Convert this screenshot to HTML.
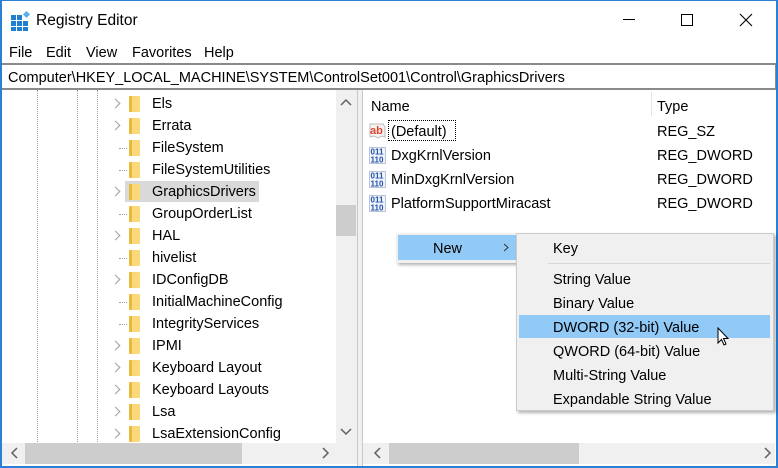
<!DOCTYPE html>
<html><head><style>
*{margin:0;padding:0;box-sizing:border-box}
body{width:778px;height:468px;overflow:hidden;background:#fff;font-family:"Liberation Sans",sans-serif;font-size:14px;color:#000;position:relative}
.a{position:absolute;white-space:nowrap}
.t{position:absolute;white-space:nowrap;line-height:16px}
.fold{position:absolute;width:11px;height:16px;background:linear-gradient(90deg,#e8b93c 0 3px,#fbd97a 3px);border-radius:1px}
.chev{position:absolute;width:7px;height:7px;border-right:1.5px solid #a0a0a0;border-top:1.5px solid #a0a0a0;transform:rotate(45deg)}
.dot{position:absolute;border-left:1px dotted #a0a0a0}
.ico{position:absolute;width:17px;height:17px}
</style></head><body>
<div class="a" style="left:0;top:0;width:778px;height:468px;border:2px solid #2b7fd4;border-top:1px solid #2b7fd4"></div>
<svg class="a" style="left:11px;top:11px" width="20" height="20" viewBox="0 0 20 20">
<rect x="0" y="4" width="5" height="5" fill="#1f7fd0"/><rect x="6" y="4" width="5" height="5" fill="#1f7fd0"/>
<rect x="0" y="10" width="5" height="5" fill="#1f7fd0"/><rect x="6" y="10" width="5" height="5" fill="#1f7fd0"/><rect x="12" y="10" width="5" height="5" fill="#1f7fd0"/>
<rect x="0" y="16" width="5" height="4" fill="#1f7fd0"/><rect x="6" y="16" width="5" height="4" fill="#1f7fd0"/><rect x="12" y="16" width="5" height="4" fill="#1f7fd0"/>
<rect x="13" y="1" width="5" height="5" fill="#5ab0ea" transform="rotate(45 15.5 3.5)"/></svg>
<div class="t" style="left:36px;top:13px;font-size:15.5px">Registry Editor</div>
<div class="a" style="left:623px;top:19px;width:12px;border-top:1px solid #000"></div>
<div class="a" style="left:681px;top:14px;width:12px;height:12px;border:1px solid #000"></div>
<svg class="a" style="left:739px;top:13px" width="14" height="14"><path d="M1 1L13 13M13 1L1 13" stroke="#000" stroke-width="1.1"/></svg>
<div class="t" style="left:9px;top:45px;font-size:14.5px">File</div>
<div class="t" style="left:46px;top:45px;font-size:14.5px">Edit</div>
<div class="t" style="left:86px;top:45px;font-size:14.5px">View</div>
<div class="t" style="left:132px;top:45px;font-size:14.5px">Favorites</div>
<div class="t" style="left:204px;top:45px;font-size:14.5px">Help</div>
<div class="a" style="left:2px;top:63px;width:774px;height:27px;border-top:2px solid #8a8a8a;border-bottom:2px solid #8a8a8a;border-right:1px solid #8a8a8a;background:#fff"></div>
<div class="t" style="left:8px;top:70px;font-size:14.5px">Computer\HKEY_LOCAL_MACHINE\SYSTEM\ControlSet001\Control\GraphicsDrivers</div>
<div class="a" style="left:357px;top:90px;width:6px;height:376px;background:#f0f0f0;border-left:1px solid #c8c8c8;border-right:1px solid #c8c8c8"></div>
<div class="dot" style="left:37px;top:90px;height:352px"></div>
<div class="dot" style="left:77px;top:90px;height:352px"></div>
<div class="dot" style="left:97px;top:90px;height:352px"></div>
<div class="a" style="left:125px;top:181px;width:134px;height:21px;background:#d9d9d9"></div>
<div id="tree"></div>
<div class="a" style="left:336px;top:90px;width:21px;height:353px;background:#f0f0f0"></div>
<div class="a" style="left:336px;top:205px;width:20px;height:31px;background:#cdcdcd"></div>
<svg class="a" style="left:340px;top:98px" width="12" height="8"><path d="M1 7L6 2L11 7" fill="none" stroke="#606060" stroke-width="1.5"/></svg>
<svg class="a" style="left:340px;top:428px" width="12" height="8"><path d="M1 1L6 6L11 1" fill="none" stroke="#606060" stroke-width="1.5"/></svg>
<div class="a" style="left:2px;top:443px;width:355px;height:21px;background:#f0f0f0"></div>
<div class="a" style="left:25px;top:443px;width:217px;height:21px;background:#cdcdcd"></div>
<svg class="a" style="left:10px;top:447px" width="8" height="12"><path d="M7 1L2 6L7 11" fill="none" stroke="#606060" stroke-width="1.5"/></svg>
<svg class="a" style="left:322px;top:447px" width="8" height="12"><path d="M1 1L6 6L1 11" fill="none" stroke="#606060" stroke-width="1.5"/></svg>
<div class="a" style="left:651px;top:92px;height:24px;border-left:1px solid #e5e5e5"></div>
<div class="t" style="left:371px;top:99px;font-size:14.5px">Name</div>
<div class="t" style="left:657px;top:99px;font-size:14.5px">Type</div>
<svg class="ico" style="left:369px;top:122px" viewBox="0 0 17 17"><path d="M1 2H14L16 5V15L13 14L9 16L5 14L1 15Z" fill="#f4f4f4" stroke="#bdbdbd"/><text x="1" y="12" font-size="11" font-weight="bold" fill="#e0432a" font-family="Liberation Sans">ab</text></svg>
<div class="a" style="left:388px;top:120px;width:68px;height:21px;border:1px dotted #000"></div>
<div class="t" style="left:391px;top:124px;font-size:14.5px">(Default)</div>
<div class="t" style="left:657px;top:124px;font-size:14.5px">REG_SZ</div>
<div id="rows"></div>
<div class="a" style="left:363px;top:443px;width:412px;height:21px;background:#f0f0f0"></div>
<div class="a" style="left:389px;top:443px;width:190px;height:21px;background:#cdcdcd"></div>
<svg class="a" style="left:373px;top:447px" width="8" height="12"><path d="M7 1L2 6L7 11" fill="none" stroke="#606060" stroke-width="1.5"/></svg>
<svg class="a" style="left:764px;top:447px" width="8" height="12"><path d="M1 1L6 6L1 11" fill="none" stroke="#606060" stroke-width="1.5"/></svg>
<div class="a" style="left:396px;top:233px;width:122px;height:30px;background:#f0f0f0;box-shadow:2px 2px 3px rgba(0,0,0,.3)"></div>
<div class="a" style="left:398px;top:235px;width:118px;height:25px;background:#91c9f7"></div>
<div class="t" style="left:433px;top:241px;font-size:14.5px">New</div>
<svg class="a" style="left:503px;top:243px" width="6" height="9"><path d="M1 1L5 4.5L1 8" fill="none" stroke="#333" stroke-width="1"/></svg>
<div class="a" style="left:516px;top:233px;width:258px;height:178px;background:#f0f0f0;border:1px solid #ccc;box-shadow:2px 2px 3px rgba(0,0,0,.3)"></div>
<div class="a" style="left:548px;top:263px;width:222px;border-top:1px solid #d7d7d7"></div>
<div class="a" style="left:519px;top:315px;width:251px;height:23px;background:#91c9f7"></div>
<div class="t" style="left:553px;top:241px;font-size:14.5px">Key</div>
<div class="t" style="left:553px;top:272px;font-size:14.5px">String Value</div>
<div class="t" style="left:553px;top:296px;font-size:14.5px">Binary Value</div>
<div class="t" style="left:553px;top:320px;font-size:14.5px">DWORD (32-bit) Value</div>
<div class="t" style="left:553px;top:344px;font-size:14.5px">QWORD (64-bit) Value</div>
<div class="t" style="left:553px;top:368px;font-size:14.5px">Multi-String Value</div>
<div class="t" style="left:553px;top:392px;font-size:14.5px">Expandable String Value</div>
<svg class="a" style="left:717px;top:327px" width="14" height="20"><path d="M1 1V16L4.5 12.5L7 18L9 17L6.5 11.5H11Z" fill="#fff" stroke="#000" stroke-width="1"/></svg>
<script>
var items=[["Els",1],["Errata",1],["FileSystem",0],["FileSystemUtilities",0],["GraphicsDrivers",1],["GroupOrderList",0],["HAL",1],["hivelist",0],["IDConfigDB",1],["InitialMachineConfig",0],["IntegrityServices",0],["IPMI",1],["Keyboard Layout",1],["Keyboard Layouts",1],["Lsa",1],["LsaExtensionConfig",1]];
var h="";items.forEach(function(it,i){var y=103+i*22;
if(it[1])h+='<div class="chev" style="left:112px;top:'+(y-3)+'px"></div>';else h+='<div class="a" style="left:119px;top:'+(y+1)+'px;width:8px;border-top:1px dotted #a0a0a0"></div>';
h+='<div class="fold" style="left:129px;top:'+(y-7)+'px"></div><div class="t" style="left:152px;top:'+(y-7)+'px;font-size:14.5px">'+it[0]+'</div>';});
document.getElementById("tree").outerHTML=h;
var r=["DxgKrnlVersion","MinDxgKrnlVersion","PlatformSupportMiracast"],g="";
r.forEach(function(n,i){var y=148+i*24;
g+='<svg class="ico" style="left:369px;top:'+(y-1)+'px" viewBox="0 0 17 17"><rect x="0.5" y="0.5" width="16" height="16" fill="#eef2fa" stroke="#b8c4dc"/><text x="1.5" y="7.5" font-size="8" font-weight="bold" fill="#2452a6" font-family="Liberation Sans">011</text><text x="1.5" y="15.5" font-size="8" font-weight="bold" fill="#2452a6" font-family="Liberation Sans">110</text></svg>';
g+='<div class="t" style="left:391px;top:'+y+'px;font-size:14.5px">'+n+'</div><div class="t" style="left:657px;top:'+y+'px;font-size:14.5px">REG_DWORD</div>';});
document.getElementById("rows").outerHTML=g;
</script>
</body></html>
